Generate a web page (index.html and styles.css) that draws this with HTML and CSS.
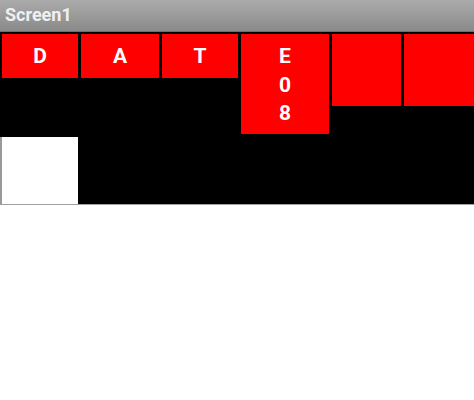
FILE: index.html
```html
<!DOCTYPE html>
<html>
<head>
<meta charset="utf-8">
<link rel="stylesheet" href="styles.css">
</head>
<body>
<div class="titlebar">Screen1</div>
<div class="table">
  <div class="btn c1">D</div>
  <div class="btn c2">A</div>
  <div class="btn c3">T</div>
  <div class="btn c4 tall">E<br>0<br>8</div>
  <div class="btn c5 mid"></div>
  <div class="btn c6 mid"></div>
  <div class="whitebox"></div>
</div>
<div class="rule"></div>
</body>
</html>
```
FILE: styles.css
```css
html, body {
  margin: 0;
  padding: 0;
  background: #ffffff;
  font-family: Roboto, "Liberation Sans", sans-serif;
}
.titlebar {
  height: 32px;
  box-sizing: border-box;
  padding-left: 5px;
  line-height: 30px;
  font-size: 18px;
  font-weight: 700;
  color: #f0f0f0;
  background: linear-gradient(#ababab, #8a8a8a);
  border-bottom: 1px solid #6e6e6e;
}
.table {
  background: #000000;
  display: grid;
  grid-template-columns: 76px 78px 76px 88px 69px 70px;
  grid-template-rows: 100px 67px;
  column-gap: 3px;
  row-gap: 3px;
  padding: 2px 0 0 2px;
  align-items: start;
}
.btn {
  background: #ff0000;
  color: #ffffff;
  font-weight: 700;
  font-size: 21px;
  text-align: center;
  height: 44px;
  line-height: 44px;
}
.tall {
  height: 100px;
  box-sizing: border-box;
  padding-top: 8px;
  line-height: 28.5px;
}
.mid {
  height: 72px;
}
.whitebox {
  grid-column: 1;
  grid-row: 2;
  height: 67px;
  background: #ffffff;
  box-shadow: -2px 0 0 #9a9a9a;
}
.rule {
  height: 1px;
  background: #a0a0a0;
}
```
